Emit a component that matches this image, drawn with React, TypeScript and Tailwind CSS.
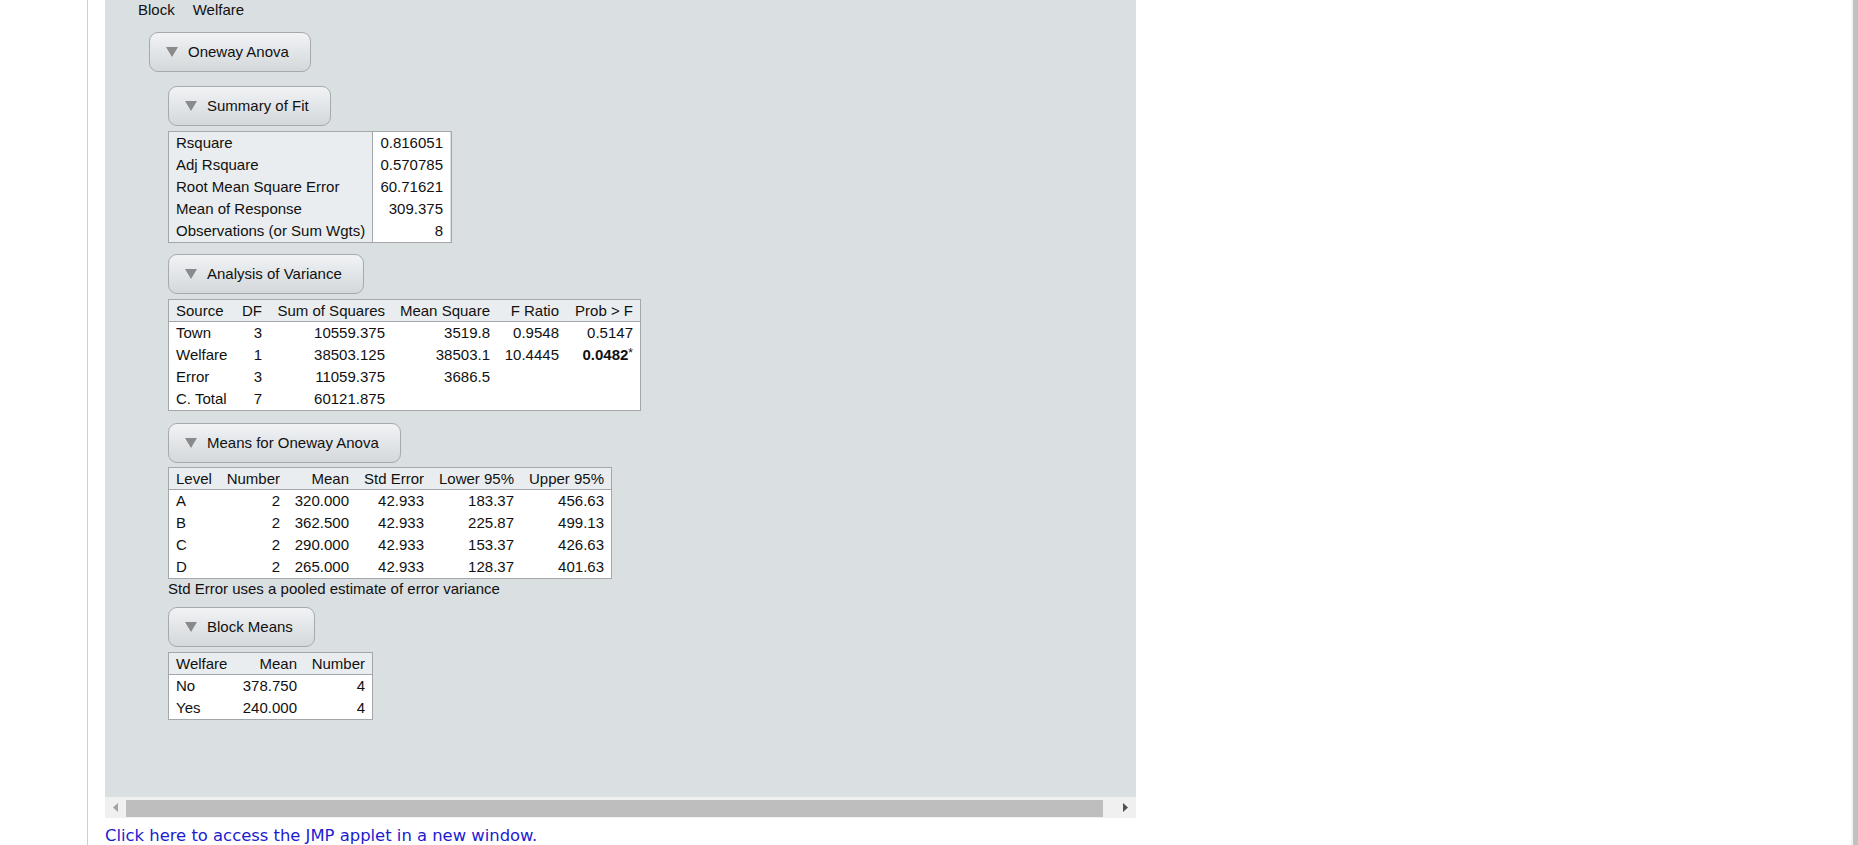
import React from "react";

const font = { fontFamily: '"Liberation Sans", Arial, sans-serif' };

function Btn({ label }: { label: string }) {
  return (
    <div className="inline-flex h-[40px] items-center self-start rounded-[9px] border border-[#a6aaae] bg-linear-to-b from-[#f1f3f5] to-[#d4d8db] pl-[16px] pr-[21px]">
      <svg width="12" height="10" viewBox="0 0 12 10">
        <path d="M0 0H12L6 10Z" fill="#8a8a8a" />
      </svg>
      <span className="ml-[10px] text-[15px] leading-[18px] text-[#111]">{label}</span>
    </div>
  );
}

type Cell = React.ReactNode;

function Table({
  cols,
  header,
  rows,
  width,
}: {
  cols: { w: number; align: "l" | "r" }[];
  header: Cell[];
  rows: Cell[][];
  width: number;
}) {
  const cell = (c: Cell, i: number, key: string) => {
    const col = cols[i];
    const last = i === cols.length - 1;
    return (
      <div
        key={key}
        style={{ width: col.w }}
        className={
          "shrink-0 whitespace-nowrap " +
          (col.align === "l" ? "pl-[7px] text-left" : "text-right") +
          (last ? " pr-[7px]" : "")
        }
      >
        {c}
      </div>
    );
  };
  return (
    <div
      style={{ width }}
      className="mt-[5px] border border-[#a3a7ab] bg-white text-[15px] text-[#111]"
    >
      <div className="flex h-[22px] items-center border-b border-[#a3a7ab] bg-[#e9edef] leading-[21px]">
        {header.map((h, i) => cell(h, i, "h" + i))}
      </div>
      {rows.map((r, ri) => (
        <div key={ri} className="flex h-[22px] items-center leading-[22px]">
          {r.map((c, i) => cell(c, i, ri + "-" + i))}
        </div>
      ))}
    </div>
  );
}

export default function App() {
  return (
    <div className="relative flex h-[845px] w-[1858px] overflow-hidden bg-white" style={font}>
      <div className="w-[87px] shrink-0" />
      <div className="w-px shrink-0 bg-[#cfcfcf]" />
      <div className="w-[17px] shrink-0" />
      <div className="flex w-[1031px] shrink-0 flex-col">
        <div className="flex h-[797px] flex-col bg-[#dadfe2] text-[#111]">
          <div className="flex h-[20px] items-center pl-[33px] text-[15px] leading-[20px]">
            <span>Block</span>
            <span className="ml-[18px]">Welfare</span>
          </div>
          <div className="ml-[44px] mt-[12px] flex">
            <Btn label="Oneway Anova" />
          </div>
          <div className="ml-[63px] mt-[14px] flex flex-col">
            <Btn label="Summary of Fit" />
            <div className="mt-[5px] flex w-[284px] border border-[#a3a7ab] text-[15px] leading-[22px] text-[#111]">
              <div className="w-[204px] border-r border-[#a3a7ab] bg-[#e9edef] pl-[7px]">
                <div className="h-[22px]">Rsquare</div>
                <div className="h-[22px]">Adj Rsquare</div>
                <div className="h-[22px]">Root Mean Square Error</div>
                <div className="h-[22px]">Mean of Response</div>
                <div className="h-[22px]">Observations (or Sum Wgts)</div>
              </div>
              <div className="w-[77px] bg-white pr-[7px] text-right">
                <div className="h-[22px]">0.816051</div>
                <div className="h-[22px]">0.570785</div>
                <div className="h-[22px]">60.71621</div>
                <div className="h-[22px]">309.375</div>
                <div className="h-[22px]">8</div>
              </div>
            </div>

            <div className="mt-[11px] flex">
              <Btn label="Analysis of Variance" />
            </div>
            <Table
              width={473}
              cols={[
                { w: 63, align: "l" },
                { w: 30, align: "r" },
                { w: 123, align: "r" },
                { w: 105, align: "r" },
                { w: 69, align: "r" },
                { w: 81, align: "r" },
              ]}
              header={["Source", "DF", "Sum of Squares", "Mean Square", "F Ratio", "Prob > F"]}
              rows={[
                ["Town", "3", "10559.375", "3519.8", "0.9548", "0.5147"],
                [
                  "Welfare",
                  "1",
                  "38503.125",
                  "38503.1",
                  "10.4445",
                  <span key="p">
                    <b>0.0482</b>
                    <span className="text-[12px] align-top leading-[18px]">*</span>
                  </span>,
                ],
                ["Error", "3", "11059.375", "3686.5", "", ""],
                ["C. Total", "7", "60121.875", "", "", ""],
              ]}
            />

            <div className="mt-[12px] flex">
              <Btn label="Means for Oneway Anova" />
            </div>
            <div className="-mt-px">
              <Table
                width={444}
                cols={[
                  { w: 51, align: "l" },
                  { w: 60, align: "r" },
                  { w: 69, align: "r" },
                  { w: 75, align: "r" },
                  { w: 90, align: "r" },
                  { w: 97, align: "r" },
                ]}
                header={["Level", "Number", "Mean", "Std Error", "Lower 95%", "Upper 95%"]}
                rows={[
                  ["A", "2", "320.000", "42.933", "183.37", "456.63"],
                  ["B", "2", "362.500", "42.933", "225.87", "499.13"],
                  ["C", "2", "290.000", "42.933", "153.37", "426.63"],
                  ["D", "2", "265.000", "42.933", "128.37", "401.63"],
                ]}
              />
            </div>
            <div className="mt-[1px] h-[18px] text-[15px] leading-[18px]">
              Std Error uses a pooled estimate of error variance
            </div>

            <div className="mt-[9px] flex">
              <Btn label="Block Means" />
            </div>
            <Table
              width={205}
              cols={[
                { w: 63, align: "l" },
                { w: 65, align: "r" },
                { w: 75, align: "r" },
              ]}
              header={["Welfare", "Mean", "Number"]}
              rows={[
                ["No", "378.750", "4"],
                ["Yes", "240.000", "4"],
              ]}
            />
          </div>
        </div>
        {/* horizontal scrollbar */}
        <div className="flex h-[21px] items-stretch bg-[#f0f0f0]">
          <div className="flex w-[21px] items-center justify-center">
            <svg width="5" height="9" viewBox="0 0 5 9">
              <path d="M5 0V9L0 4.5Z" fill="#a3a3a3" />
            </svg>
          </div>
          <div className="my-[3px] mb-[1px] w-[977px] bg-[#bebebe]" />
          <div className="flex flex-1 items-center justify-end pr-[8px]">
            <svg width="5" height="9" viewBox="0 0 5 9">
              <path d="M0 0V9L5 4.5Z" fill="#505050" />
            </svg>
          </div>
        </div>
        <div
          className="mt-[9px] whitespace-nowrap text-[16.4px] leading-[18px] text-[#1c1cd0]"
          style={{ fontFamily: '"DejaVu Sans", Verdana, sans-serif' }}
        >
          Click here to access the JMP applet in a new window.
        </div>
      </div>
      <div className="flex-1" />
      <div className="w-[2px] shrink-0 bg-[#f3f3f3]" />
      <div className="w-[5px] shrink-0 bg-[#c1c1c1]" />
    </div>
  );
}
